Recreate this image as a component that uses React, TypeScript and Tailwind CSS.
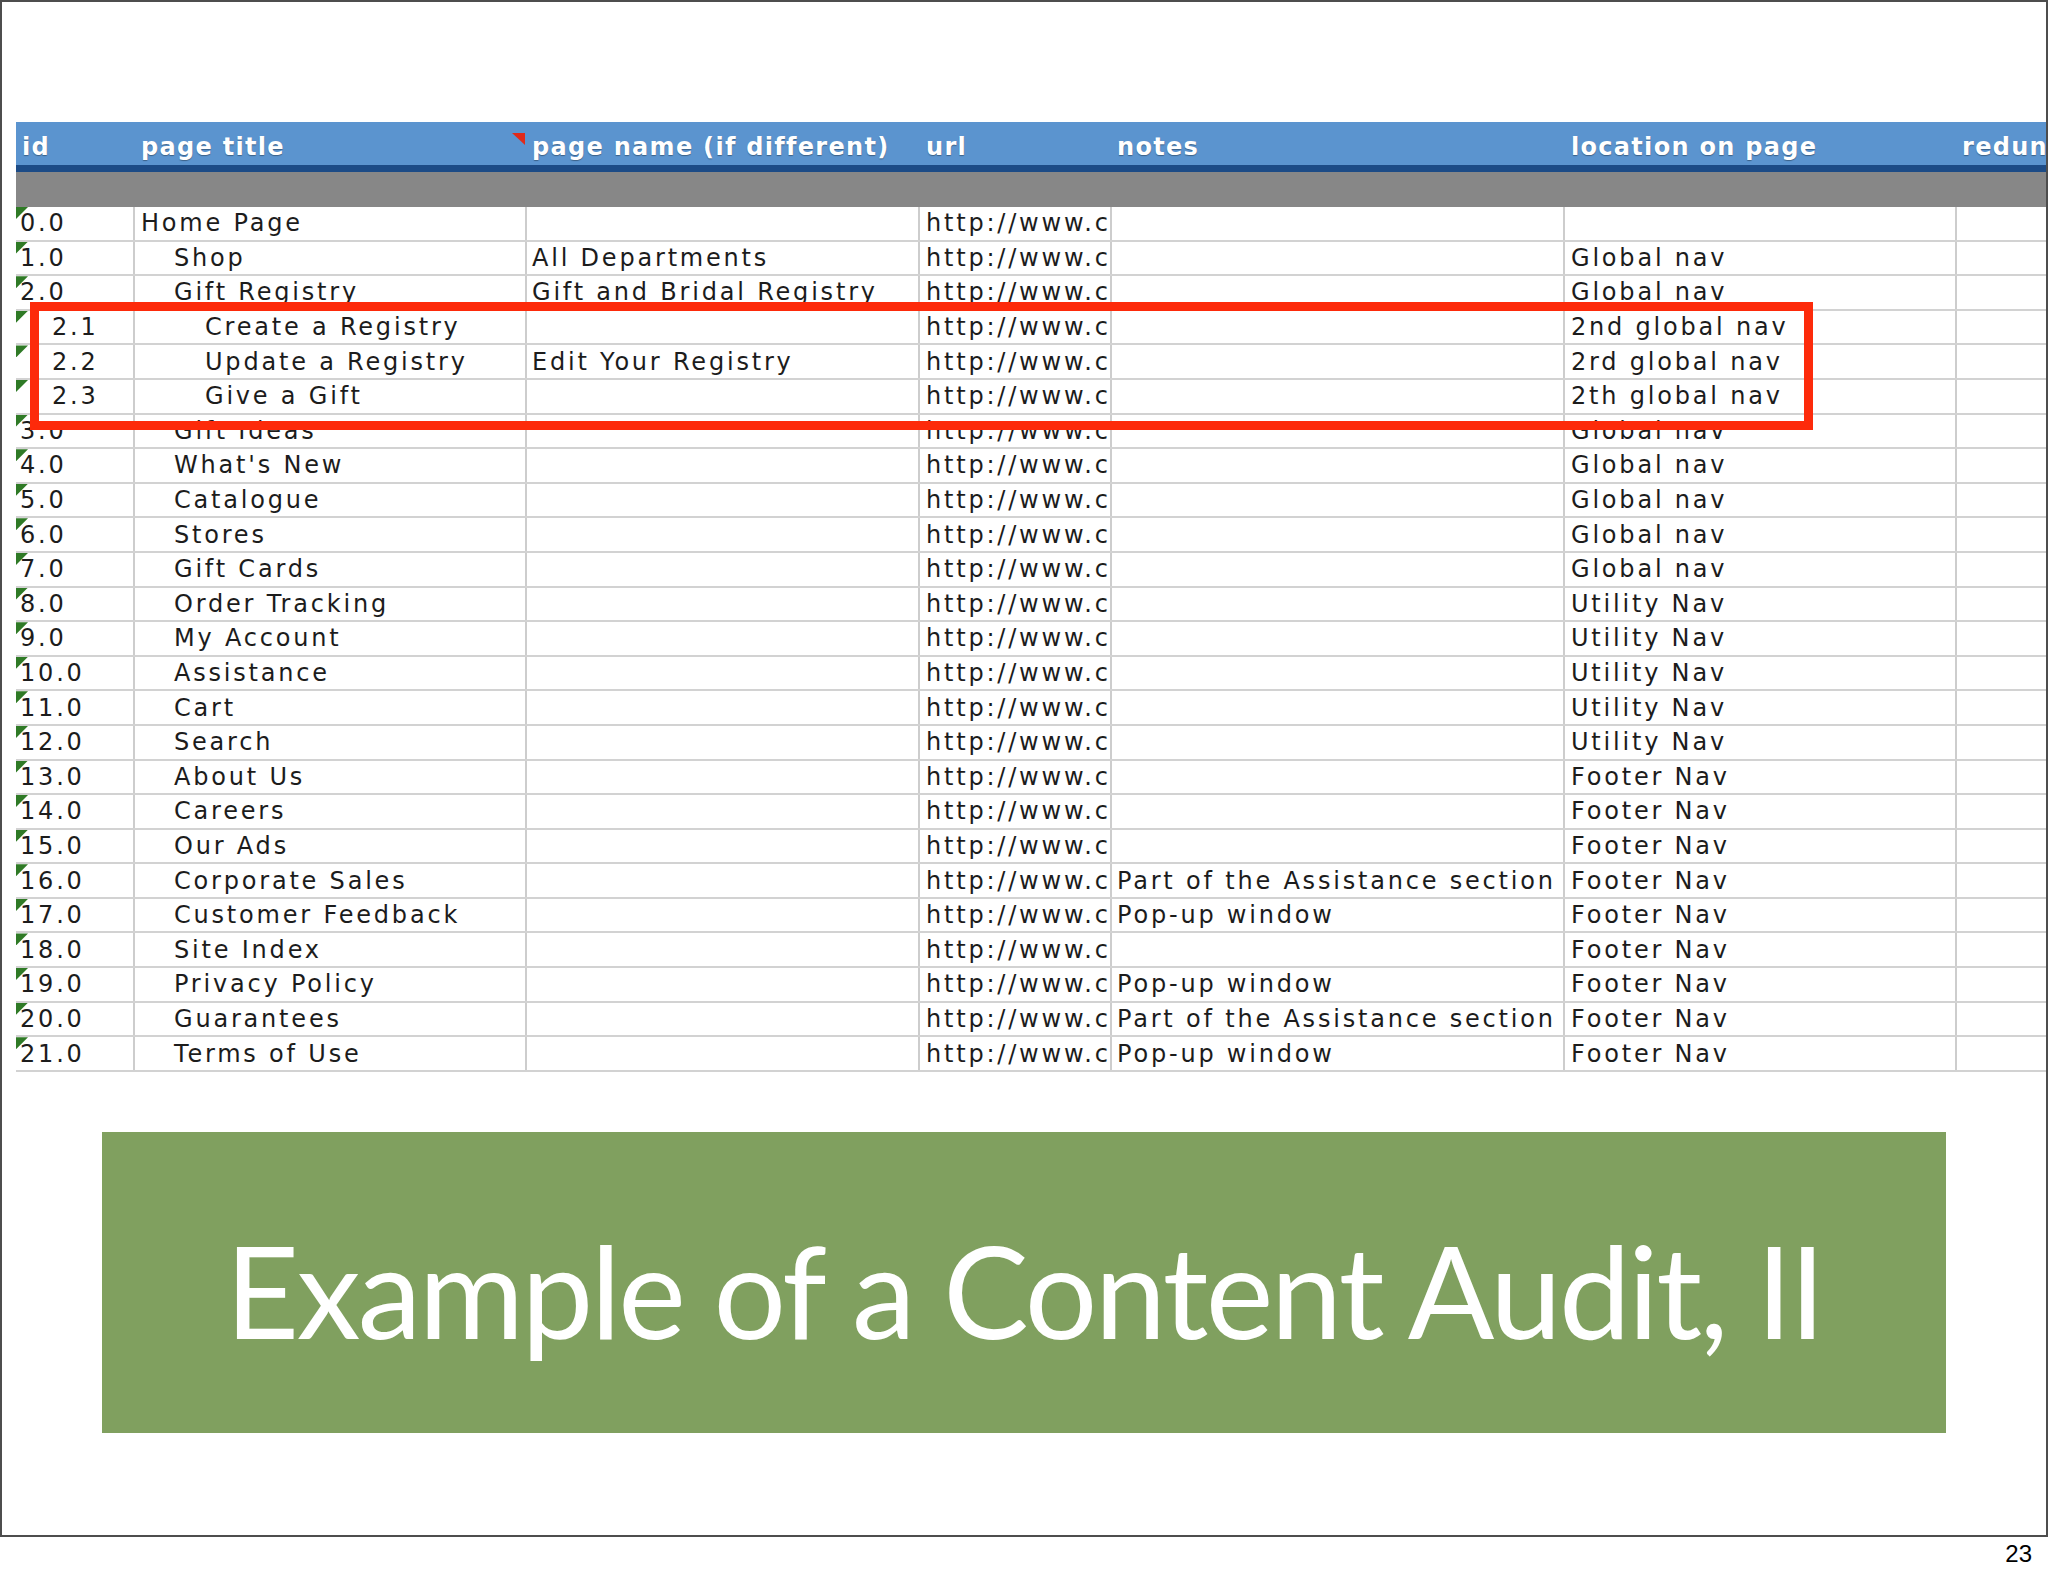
import React from 'react';

type Row = {
  id: string;
  level: number;
  title: string;
  name?: string;
  notes?: string;
  location?: string;
};

const rows: Row[] = [
  { id: '0.0', level: 0, title: 'Home Page' },
  { id: '1.0', level: 1, title: 'Shop', name: 'All Departments', location: 'Global nav' },
  { id: '2.0', level: 1, title: 'Gift Registry', name: 'Gift and Bridal Registry', location: 'Global nav' },
  { id: '2.1', level: 2, title: 'Create a Registry', location: '2nd global nav' },
  { id: '2.2', level: 2, title: 'Update a Registry', name: 'Edit Your Registry', location: '2rd global nav' },
  { id: '2.3', level: 2, title: 'Give a Gift', location: '2th global nav' },
  { id: '3.0', level: 1, title: 'Gift Ideas', location: 'Global nav' },
  { id: '4.0', level: 1, title: "What's New", location: 'Global nav' },
  { id: '5.0', level: 1, title: 'Catalogue', location: 'Global nav' },
  { id: '6.0', level: 1, title: 'Stores', location: 'Global nav' },
  { id: '7.0', level: 1, title: 'Gift Cards', location: 'Global nav' },
  { id: '8.0', level: 1, title: 'Order Tracking', location: 'Utility Nav' },
  { id: '9.0', level: 1, title: 'My Account', location: 'Utility Nav' },
  { id: '10.0', level: 1, title: 'Assistance', location: 'Utility Nav' },
  { id: '11.0', level: 1, title: 'Cart', location: 'Utility Nav' },
  { id: '12.0', level: 1, title: 'Search', location: 'Utility Nav' },
  { id: '13.0', level: 1, title: 'About Us', location: 'Footer Nav' },
  { id: '14.0', level: 1, title: 'Careers', location: 'Footer Nav' },
  { id: '15.0', level: 1, title: 'Our Ads', location: 'Footer Nav' },
  { id: '16.0', level: 1, title: 'Corporate Sales', notes: 'Part of the Assistance section', location: 'Footer Nav' },
  { id: '17.0', level: 1, title: 'Customer Feedback', notes: 'Pop-up window', location: 'Footer Nav' },
  { id: '18.0', level: 1, title: 'Site Index', location: 'Footer Nav' },
  { id: '19.0', level: 1, title: 'Privacy Policy', notes: 'Pop-up window', location: 'Footer Nav' },
  { id: '20.0', level: 1, title: 'Guarantees', notes: 'Part of the Assistance section', location: 'Footer Nav' },
  { id: '21.0', level: 1, title: 'Terms of Use', notes: 'Pop-up window', location: 'Footer Nav' },
];

const cols = 'grid grid-cols-[119px_392px_393px_192px_453px_392px_89px]';
const cell = 'h-full flex items-center overflow-hidden whitespace-nowrap border-r-2 border-[#cdcdcd]';
const titlePad = ['pl-[6px]', 'pl-[39px]', 'pl-[70px]'];

const AuditRow: React.FC<{ row: Row }> = ({ row }) => (
  <div className={`${cols} h-[34.6px] border-b-2 border-[#d2d2d2] text-[24px] tracking-[2.8px] text-[#1c1c1c]`}>
    <div className={`${cell} relative ${row.level === 2 ? 'pl-[36px]' : 'pl-[4px]'}`}>
      <span className="absolute left-0 top-0 w-[12px] h-[12px] bg-[#2f7a26] [clip-path:polygon(0_0,100%_0,0_100%)]" />
      {row.id}
    </div>
    <div className={`${cell} ${titlePad[row.level]}`}>{row.title}</div>
    <div className={`${cell} pl-[5px]`}>{row.name}</div>
    <div className={`${cell} pl-[6px]`}>http://www.client-site.com</div>
    <div className={`${cell} pl-[5px]`}>{row.notes}</div>
    <div className={`${cell} pl-[6px]`}>{row.location}</div>
    <div className="h-full" />
  </div>
);

export default function App() {
  return (
    <div className="w-[2048px] h-[1576px] bg-white" style={{ fontFamily: '"DejaVu Sans", Verdana, sans-serif' }}>
      <div className="w-[2048px] h-[1537px] border-2 border-[#4d4d4d] pt-[120px] pl-[14px]">
        <div className="relative w-[2030px]">
          <div className={`${cols} h-[43px] pt-[6px] bg-[#5b94cf] text-white font-bold text-[24px] tracking-[1.3px] [text-shadow:0_1px_1px_rgba(0,0,0,0.35)]`}>
            <div className="flex items-center pl-[6px]">id</div>
            <div className="relative flex items-center pl-[6px]">
              page title
              <span className="absolute right-[2px] top-[5px] w-[13px] h-[12px] bg-[#e02a1a] [clip-path:polygon(0_0,100%_0,100%_100%)]" />
            </div>
            <div className="flex items-center pl-[5px] whitespace-nowrap">page name (if different)</div>
            <div className="flex items-center pl-[6px]">url</div>
            <div className="flex items-center pl-[5px]">notes</div>
            <div className="flex items-center pl-[6px]">location on page</div>
            <div className="flex items-center pl-[5px] overflow-hidden whitespace-nowrap">redundant</div>
          </div>
          <div className="h-[7px] bg-[#1c4b86]" />
          <div className="h-[35px] bg-[#878787]" />
          {rows.map((r) => (
            <AuditRow key={r.id} row={r} />
          ))}
          <div className="absolute left-[14px] top-[180px] w-[1783px] h-[128px] border-[9px] border-[#fd2a0a]" />
        </div>

        <div className="ml-[86px] mt-[60px] w-[1844px] h-[301px] bg-[#80a05f] flex items-center justify-center pt-[15px]">
          <span className="text-white text-[128px] leading-none tracking-[-2.6px]" style={{ fontFamily: 'Lato, "Open Sans", sans-serif' }}>
            Example of a Content Audit, II
          </span>
        </div>
      </div>
      <div className="flex justify-end pr-[16px] pt-[5px]">
        <span className="text-[24px] leading-none text-black" style={{ fontFamily: '"Liberation Sans", Arial, sans-serif' }}>
          23
        </span>
      </div>
    </div>
  );
}
